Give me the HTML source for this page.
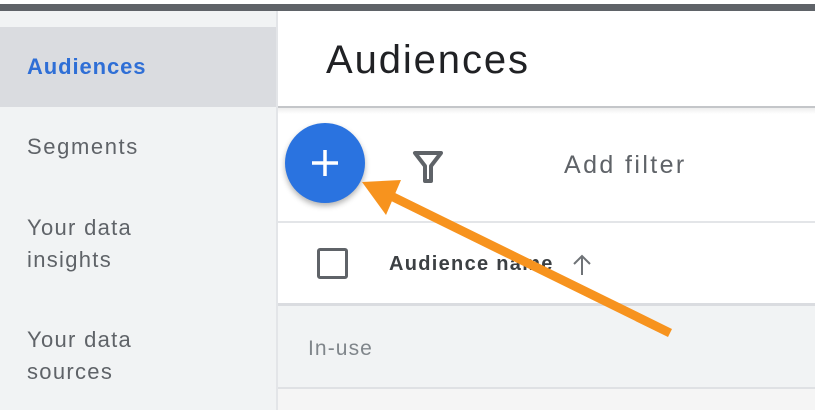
<!DOCTYPE html>
<html><head><style>
*{margin:0;padding:0;box-sizing:border-box}
body{width:824px;height:416px;background:#fff;position:relative;overflow:hidden;font-family:"Liberation Sans",Arial,sans-serif}
.a{position:absolute}
.t{position:absolute;white-space:nowrap}
</style></head><body>
<div class="a" style="left:0;top:4px;width:815px;height:7px;background:#5f6368"></div>
<div class="a" style="left:0;top:11px;width:276px;height:399px;background:#f1f3f4"></div>
<div class="a" style="left:0;top:27px;width:276px;height:80px;background:#dadce0"></div>
<div class="a" style="left:276px;top:11px;width:2px;height:399px;background:#e3e5e8"></div>
<div class="t" style="left:27px;top:54px;font-size:22px;font-weight:bold;color:#2f6fd6;letter-spacing:0.9px">Audiences</div>
<div class="t" style="left:27px;top:134px;font-size:22px;color:#5f6368;letter-spacing:1.6px">Segments</div>
<div class="t" style="left:27px;top:212px;font-size:22px;line-height:32px;color:#5f6368;white-space:normal;width:160px;letter-spacing:1.3px">Your data insights</div>
<div class="t" style="left:27px;top:324px;font-size:22px;line-height:32px;color:#5f6368;white-space:normal;width:160px;letter-spacing:1.3px">Your data sources</div>
<div class="t" style="left:326px;top:38px;font-size:40px;color:#202124;letter-spacing:1.9px">Audiences</div>
<div class="a" style="left:278px;top:106px;width:537px;height:2px;background:#c4c6c9"></div>
<div class="a" style="left:278px;top:108px;width:537px;height:6px;background:linear-gradient(#eee,#fff)"></div>
<div class="t" style="left:564px;top:151px;font-size:25px;color:#5f6368;letter-spacing:2.4px">Add filter</div>
<svg class="a" style="left:412px;top:150px" width="32" height="34" viewBox="0 0 32 34"><path d="M3 3H29L19 16V31H13V16Z" fill="none" stroke="#5f6368" stroke-width="4" stroke-linejoin="round"/></svg>
<div class="a" style="left:278px;top:221px;width:537px;height:2px;background:#e3e5e8"></div>
<div class="a" style="left:317px;top:248px;width:31px;height:31px;border:3px solid #5f6368;border-radius:3px"></div>
<div class="t" style="left:389px;top:253px;font-size:20px;font-weight:bold;color:#3c4043;letter-spacing:1.3px">Audience name</div>
<svg class="a" style="left:571px;top:253px" width="22" height="24" viewBox="0 0 22 24"><path d="M11 22V3M3 11L11 3L19 11" fill="none" stroke="#6f7377" stroke-width="2"/></svg>
<div class="a" style="left:278px;top:303px;width:537px;height:3px;background:#dadce0"></div>
<div class="a" style="left:278px;top:306px;width:537px;height:81px;background:#f1f3f4"></div>
<div class="t" style="left:308px;top:337px;font-size:21px;color:#80868b;letter-spacing:1.1px">In-use</div>
<div class="a" style="left:278px;top:387px;width:537px;height:2px;background:#dfe1e4"></div>
<div class="a" style="left:278px;top:389px;width:537px;height:21px;background:#f5f5f5"></div>
<div class="a" style="left:285px;top:123px;width:80px;height:80px;border-radius:50%;background:#2a73e0;box-shadow:0 3px 6px rgba(0,0,0,.3)"></div>
<svg class="a" style="left:285px;top:123px" width="80" height="80"><path d="M40 27V53M27 40H53" stroke="#fff" stroke-width="3.5"/></svg>
<svg class="a" style="left:0;top:0" width="824" height="416"><path d="M670 333L385 193" stroke="#f7931e" stroke-width="9"/><path d="M362 182L401 180L386 215Z" fill="#f7931e"/></svg>
</body></html>
